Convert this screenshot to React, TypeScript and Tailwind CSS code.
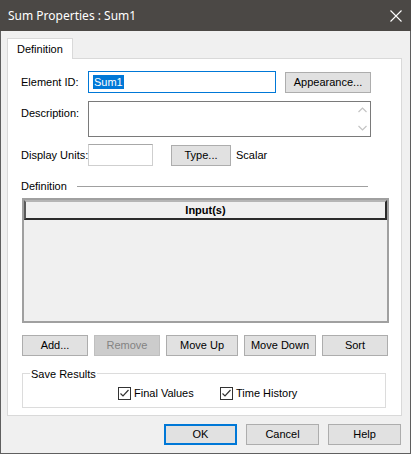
import React from "react";

const font = { fontFamily: '"Liberation Sans", Arial, sans-serif' };

function Btn({
  label,
  w,
  disabled,
  primary,
}: {
  label: string;
  w: string;
  disabled?: boolean;
  primary?: boolean;
}) {
  const base = "h-[21px] flex items-center justify-center text-[11px] ";
  let cls = "bg-[#e1e1e1] border border-[#adadad] text-black";
  if (disabled) cls = "bg-[#cccccc] border border-[#bfbfbf] text-[#838383]";
  if (primary) cls = "bg-[#e1e1e1] border-2 border-[#0078d7] text-black";
  return <div className={base + cls + " " + w}>{label}</div>;
}

function Check({ label }: { label: string }) {
  return (
    <div className="flex items-center gap-[3px]">
      <div className="w-[13px] h-[13px] border border-[#333333] bg-white flex items-center justify-center">
        <svg width="11" height="11" viewBox="0 0 11 11">
          <path d="M1.5 5.5 L4 8 L9.5 2" fill="none" stroke="#333" strokeWidth="1.2" />
        </svg>
      </div>
      <span className="text-[11px] whitespace-nowrap">{label}</span>
    </div>
  );
}

export default function App() {
  return (
    <div
      className="w-[411px] h-[454px] bg-[#f0f0f0] border-x border-b border-[#5f5f5f] flex flex-col text-black"
      style={font}
    >
      <div className="h-[31px] bg-[#4b4845] flex items-center justify-between pl-[8px] pr-[9px] -mx-px">
        <span className="text-white text-[12px]" style={{ fontFamily: '"Noto Sans", sans-serif' }}>
          Sum Properties : Sum1
        </span>
        <svg width="12" height="12" viewBox="0 0 12 12">
          <path d="M0.5 0.5 L11.5 11.5 M11.5 0.5 L0.5 11.5" stroke="#ffffff" strokeWidth="1.1" />
        </svg>
      </div>

      <div className="pl-[6px] pr-[8px] pt-[7px] flex flex-col">
        <div className="flex">
          <div className="h-[21px] px-[9px] flex items-center bg-white border border-b-0 border-[#d9d9d9] text-[11px] relative z-10 -mb-px">
            Definition
          </div>
        </div>
        <div className="h-[358px] bg-white border border-[#d9d9d9] pt-[12px] pl-[13px] flex flex-col">
          <div className="flex items-center h-[22px]">
            <span className="w-[67px] shrink-0 whitespace-nowrap text-[11px]">Element ID:</span>
            <div className="w-[188px] h-[22px] border border-[#0078d7] flex items-center pl-[4px]">
              <span className="bg-[#0078d7] text-white text-[11px] leading-[14px] px-px">Sum1</span>
            </div>
            <div className="ml-[9px]">
              <Btn label="Appearance..." w="w-[86px]" />
            </div>
          </div>

          <div className="flex mt-[8px]">
            <span className="w-[67px] shrink-0 whitespace-nowrap text-[11px] pt-[4px]">Description:</span>
            <div className="w-[283px] h-[36px] border border-[#7a7a7a] flex justify-end">
              <div className="w-[16px] flex flex-col items-center justify-between py-[5px]">
                <svg width="9" height="6" viewBox="0 0 9 6">
                  <path d="M0.5 5 L4.5 1 L8.5 5" fill="none" stroke="#c4c4c4" strokeWidth="1.2" />
                </svg>
                <svg width="9" height="6" viewBox="0 0 9 6">
                  <path d="M0.5 1 L4.5 5 L8.5 1" fill="none" stroke="#c4c4c4" strokeWidth="1.2" />
                </svg>
              </div>
            </div>
          </div>

          <div className="flex items-center mt-[7px] h-[22px]">
            <span className="w-[67px] shrink-0 whitespace-nowrap text-[11px]">Display Units:</span>
            <div className="w-[65px] h-[22px] border border-[#cfcfcf] border-t-[#a8a8a8]" />
            <div className="ml-[18px]">
              <Btn label="Type..." w="w-[60px]" />
            </div>
            <span className="ml-[5px] text-[11px]">Scalar</span>
          </div>

          <div className="flex items-center mt-[13px] h-[14px]">
            <span className="text-[11px]">Definition</span>
            <div className="ml-[10px] w-[291px] h-px bg-[#a0a0a0]" />
          </div>

          <div className="mt-[5px] ml-px w-[367px] h-[125px] border-2 border-[#a0a0a0] bg-[#f0f0f0]">
            <div className="h-[20px] border-2 border-[#2b2b2b] border-t-[#b5b5b5] border-l-[#5a5a5a] flex items-center justify-center text-[11px] font-bold">
              Input(s)
            </div>
          </div>

          <div className="flex gap-[6px] mt-[12px] ml-px">
            <Btn label="Add..." w="w-[66px]" />
            <Btn label="Remove" w="w-[66px]" disabled />
            <Btn label="Move Up" w="w-[72px]" />
            <Btn label="Move Down" w="w-[72px]" />
            <Btn label="Sort" w="w-[66px]" />
          </div>

          <div className="mt-[17px] ml-px w-[364px] h-[35px] border border-[#dcdcdc] relative flex items-center pl-[95px] pt-[6px]">
            <span className="absolute -top-[8px] left-[7px] bg-white px-px text-[11px]">Save Results</span>
            <div className="w-[102px]">
              <Check label="Final Values" />
            </div>
            <Check label="Time History" />
          </div>
        </div>

        <div className="flex justify-end gap-[9px] mt-[8px] mr-px">
          <Btn label="OK" w="w-[73px]" primary />
          <Btn label="Cancel" w="w-[73px]" />
          <Btn label="Help" w="w-[73px]" />
        </div>
      </div>
    </div>
  );
}
